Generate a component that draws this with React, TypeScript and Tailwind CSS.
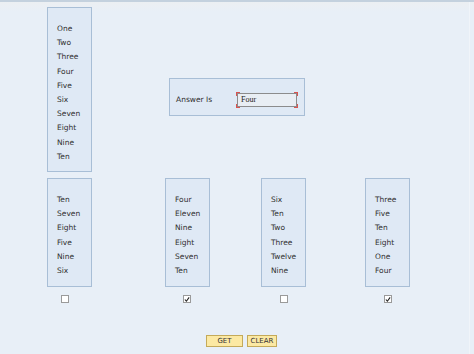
import React from 'react';

const font = { fontFamily: '"DejaVu Sans", Verdana, sans-serif' };

interface ListBoxProps {
  items: string[];
  height: string;
}

function ListBox({ items, height }: ListBoxProps) {
  return (
    <div
      className={`w-[45px] ${height} bg-[#dfe9f5] border border-[#a8bed6] pl-[9px] pt-[14px] text-[7.5px] leading-[14.2px] text-[#2f2f2f]`}
    >
      {items.map((item) => (
        <div key={item}>{item}</div>
      ))}
    </div>
  );
}

function Check({ checked }: { checked: boolean }) {
  return (
    <div className="w-[8px] h-[8px] border border-[#9a9a9a] bg-white flex items-center justify-center">
      {checked && (
        <svg width="7" height="7" viewBox="0 0 7 7">
          <path d="M1 3.5 L2.8 5.5 L6 1" fill="none" stroke="#222" strokeWidth="1.3" />
        </svg>
      )}
    </div>
  );
}

function Column({ items, checked, cbOffset }: { items: string[]; checked: boolean; cbOffset: string }) {
  return (
    <div className="flex flex-col">
      <ListBox items={items} height="h-[109px]" />
      <div className={`mt-[8px] ${cbOffset}`}>
        <Check checked={checked} />
      </div>
    </div>
  );
}

export default function App() {
  return (
    <div
      style={font}
      className="relative w-[474px] h-[354px] bg-[#e8eff7] border-t-2 border-[#c4d1de] overflow-hidden"
    >
      <div className="absolute inset-x-0 top-0 h-[10px] bg-gradient-to-b from-[#eceff2] to-[#e8eff7]" />
      <div className="absolute right-[4px] top-0 bottom-0 w-px bg-[#f0f4f9]" />

      <div className="relative flex pl-[47px] pt-[5px]">
        <ListBox
          items={['One', 'Two', 'Three', 'Four', 'Five', 'Six', 'Seven', 'Eight', 'Nine', 'Ten']}
          height="h-[165px]"
        />
        <div className="ml-[77px] mt-[71px] w-[136px] h-[38px] bg-[#dfe9f5] border border-[#a8bed6] flex items-center pl-[6px] pt-[5px]">
          <span className="text-[7.5px] text-[#2f2f2f] w-[61px]">Answer Is</span>
          <div className="relative w-[60px] h-[14px] border border-[#8c8c8c] bg-[#e9eef4] flex items-center pl-[3px]">
            <span className="text-[8px] text-[#222]" style={{ fontFamily: '"Liberation Serif", serif' }}>
              Four
            </span>
            <span className="absolute -left-[2px] -top-[2px] w-[4px] h-[4px] border-l border-t border-[#d9534f]" />
            <span className="absolute -right-[2px] -top-[2px] w-[4px] h-[4px] border-r border-t border-[#d9534f]" />
            <span className="absolute -left-[2px] -bottom-[2px] w-[4px] h-[4px] border-l border-b border-[#d9534f]" />
            <span className="absolute -right-[2px] -bottom-[2px] w-[4px] h-[4px] border-r border-b border-[#d9534f]" />
          </div>
        </div>
      </div>

      <div className="relative flex pl-[47px] mt-[6px]">
        <Column items={['Ten', 'Seven', 'Eight', 'Five', 'Nine', 'Six']} checked={false} cbOffset="ml-[14px]" />
        <div className="ml-[73px]">
          <Column items={['Four', 'Eleven', 'Nine', 'Eight', 'Seven', 'Ten']} checked cbOffset="ml-[18px]" />
        </div>
        <div className="ml-[51px]">
          <Column items={['Six', 'Ten', 'Two', 'Three', 'Twelve', 'Nine']} checked={false} cbOffset="ml-[19px]" />
        </div>
        <div className="ml-[59px]">
          <Column items={['Three', 'Five', 'Ten', 'Eight', 'One', 'Four']} checked cbOffset="ml-[19px]" />
        </div>
      </div>

      <div className="relative flex pl-[206px] mt-[32px] gap-[4px]">
        <button className="w-[37px] h-[12px] bg-[#fce9a3] border border-[#c4aa5a] text-[7px] leading-none text-[#333] flex items-center justify-center">
          GET
        </button>
        <button className="w-[30px] h-[12px] bg-[#fce9a3] border border-[#c4aa5a] text-[7px] leading-none text-[#333] flex items-center justify-center">
          CLEAR
        </button>
      </div>
    </div>
  );
}
